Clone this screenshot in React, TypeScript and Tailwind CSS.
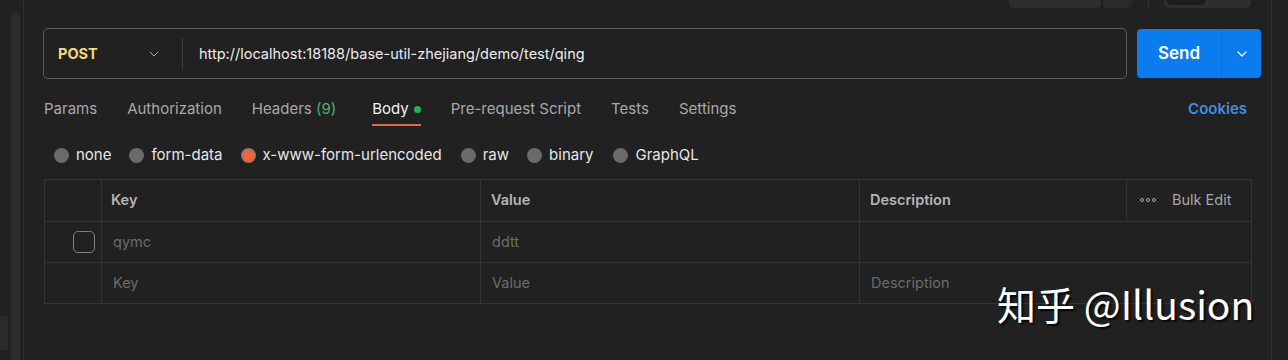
import React from "react";
import { ChevronDown } from "lucide-react";

const font = { fontFamily: "Inter, 'Noto Sans', sans-serif" };

function Radio({ label, selected }: { label: string; selected?: boolean }) {
  return (
    <div className="flex items-center gap-[7px]">
      {selected ? (
        <span className="w-[15px] h-[15px] rounded-full bg-[#f2653a] border-[2px] border-[#a07566] box-border" />
      ) : (
        <span className="w-[15px] h-[15px] rounded-full bg-[#6a6a6a]" />
      )}
      <span className="text-[15px] text-[#e6e6e6]">{label}</span>
    </div>
  );
}

export default function App() {
  return (
    <div className="relative w-[1288px] h-[360px] bg-[#212121] flex overflow-hidden" style={font}>
      {/* left sidebar */}
      <div className="relative w-[24px] h-full border-r border-[#2f2f2f] shrink-0">
        <div className="absolute left-[11px] top-[12px] w-[9px] h-[348px] rounded-t-full bg-[#2c2c2c]" />
        <div className="absolute left-0 top-[316px] w-[8px] h-[34px] bg-[#2b2b2b]" />
      </div>

      {/* main */}
      <div className="flex-1 flex flex-col pl-[19px] pr-[10px]">
        {/* top cut-off buttons */}
        <div className="h-[8px] flex items-start">
          <div className="ml-[966px] w-[92px] h-[8px] rounded-b-[5px] bg-[#2e2e2e]" />
          <div className="ml-[2px] w-[29px] h-[8px] rounded-b-[5px] bg-[#2a2a2a]" />
          <div className="ml-[16px] w-px h-[8px] bg-[#2e2e2e]" />
          <div className="ml-[15px] w-[87px] h-[8px] rounded-b-[5px] bg-[#2e2e2e] pl-[3px]">
            <div className="w-[38px] h-[5px] rounded-b-[4px] bg-[#1c1c1c]" />
          </div>
        </div>

        {/* URL row */}
        <div className="mt-[20px] flex gap-[10px] items-center">
          <div className="w-[1084px] h-[51px] rounded-[5px] border border-[#5c5c5c] flex items-center">
            <div className="w-[138px] flex items-center justify-between pl-[14px] pr-[20px]">
              <span className="text-[14.5px] font-bold text-[#f4d97a]">POST</span>
              <ChevronDown size={16} strokeWidth={1.5} color="#a8a8a8" />
            </div>
            <div className="w-px h-[31px] bg-[#3e3e3e]" />
            <span className="ml-[16px] text-[14.5px] text-[#ececec]">
              http://localhost:18188/base-util-zhejiang/demo/test/qing
            </span>
          </div>
          <div className="w-[124px] h-[49px] rounded-[4px] bg-[#0b7cee] flex items-center">
            <div className="w-[84px] flex justify-center">
              <span className="text-[17px] font-semibold text-white">Send</span>
            </div>
            <div className="w-px h-full bg-[#0a6fd6]" />
            <div className="flex-1 flex justify-center">
              <ChevronDown size={16} strokeWidth={1.8} color="#ffffff" />
            </div>
          </div>
        </div>

        {/* tabs */}
        <div className="mt-[19px] h-[32px] flex items-start justify-between pl-[1px] pr-[14px]">
          <div className="flex gap-[30px] text-[15px] text-[#a8a8a8]">
            <span>Params</span>
            <span>Authorization</span>
            <span>
              Headers <span className="text-[#4fb26d]">(9)</span>
            </span>
            <div className="relative ml-[6px] flex items-center gap-[5px] text-[#f2f2f2]">
              <span>Body</span>
              <span className="w-[7px] h-[7px] rounded-full bg-[#1fb35a]" />
              <div className="absolute left-0 right-0 top-[26px] h-[2px] bg-[#e2684a]" />
            </div>
            <span>Pre-request Script</span>
            <span>Tests</span>
            <span>Settings</span>
          </div>
          <span className="text-[15px] font-semibold text-[#3f8ee0]">Cookies</span>
        </div>

        {/* radios */}
        <div className="mt-[14px] flex items-center gap-[18px] pl-[11px]">
          <Radio label="none" />
          <Radio label="form-data" />
          <Radio label="x-www-form-urlencoded" selected />
          <div className="ml-[1px]">
            <Radio label="raw" />
          </div>
          <Radio label="binary" />
          <div className="ml-[2px]">
            <Radio label="GraphQL" />
          </div>
        </div>

        {/* table */}
        <div className="mt-[12px] ml-[1px] w-[1208px] border border-[#343434] text-[14.5px]">
          <div className="h-[42px] flex border-b border-[#343434]">
            <div className="w-[57px] border-r border-[#343434]" />
            <div className="w-[379px] border-r border-[#343434] flex items-center pl-[9px] font-semibold text-[#b5b5b5]">
              Key
            </div>
            <div className="w-[379px] border-r border-[#343434] flex items-center pl-[10px] font-semibold text-[#b5b5b5]">
              Value
            </div>
            <div className="w-[267px] border-r border-[#343434] flex items-center pl-[10px] font-semibold text-[#b5b5b5]">
              Description
            </div>
            <div className="flex-1 flex items-center pl-[13px] gap-[16px] text-[#a8a8a8]">
              <span className="flex gap-[2px]">
                <span className="w-[4px] h-[4px] rounded-full border border-[#a8a8a8]" />
                <span className="w-[4px] h-[4px] rounded-full border border-[#a8a8a8]" />
                <span className="w-[4px] h-[4px] rounded-full border border-[#a8a8a8]" />
              </span>
              <span>Bulk Edit</span>
            </div>
          </div>
          <div className="h-[41px] flex border-b border-[#343434]">
            <div className="w-[57px] border-r border-[#343434] flex items-center justify-end pr-[6px]">
              <span className="w-[22px] h-[22px] rounded-[5px] border border-[#7f7f7f]" />
            </div>
            <div className="w-[379px] border-r border-[#343434] flex items-center pl-[11px] text-[#6c6c6c]">
              qymc
            </div>
            <div className="w-[379px] border-r border-[#343434] flex items-center pl-[11px] text-[#6c6c6c]">
              ddtt
            </div>
            <div className="flex-1" />
          </div>
          <div className="h-[40px] flex">
            <div className="w-[57px] border-r border-[#343434]" />
            <div className="w-[379px] border-r border-[#343434] flex items-center pl-[11px] text-[#6c6c6c]">
              Key
            </div>
            <div className="w-[379px] border-r border-[#343434] flex items-center pl-[11px] text-[#6c6c6c]">
              Value
            </div>
            <div className="flex-1 flex items-center pl-[11px] text-[#6c6c6c]">Description</div>
          </div>
        </div>
      </div>

      {/* right strip */}
      <div className="w-[17px] h-full border-l border-[#2f2f2f] shrink-0" />

      {/* watermark */}
      <div
        className="absolute left-[997px] top-[284px] text-[39px] text-white leading-none whitespace-nowrap"
        style={{
          fontFamily: "'Noto Sans CJK SC', 'Noto Sans', sans-serif",
          textShadow: "2px 2px 2px rgba(0,0,0,0.8)",
        }}
      >
        知乎 @Illusion
      </div>
    </div>
  );
}
